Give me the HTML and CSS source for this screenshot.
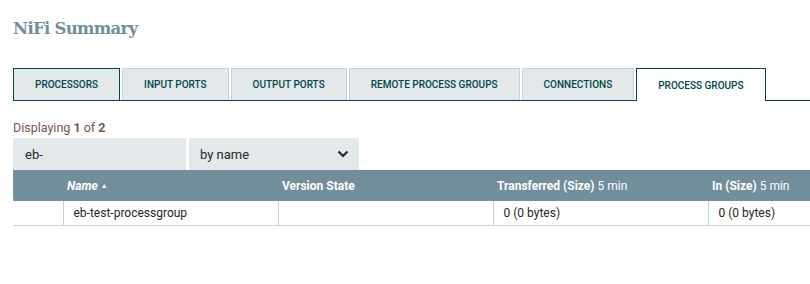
FILE: index.html
```html
<!DOCTYPE html>
<html lang="en">
<head>
  <meta charset="UTF-8" />
  <title>NiFi Summary</title>
  <link rel="stylesheet" href="styles.css">
</head>
<body>
  <div class="page">
    <h1 class="title">NiFi Summary</h1>

    <ul class="tabs">
      <li class="tab focused">Processors</li>
      <li class="tab">Input Ports</li>
      <li class="tab">Output Ports</li>
      <li class="tab">Remote Process Groups</li>
      <li class="tab">Connections</li>
      <li class="tab active">Process Groups</li>
    </ul>

    <div class="summary">Displaying <b>1</b> of <b>2</b></div>

    <div class="filter">
      <div class="filter-input">eb-</div>
      <div class="filter-select">
        <span>by name</span>
        <svg width="12" height="8" viewBox="0 0 12 8">
          <polyline points="1.5,1.5 6,6 10.5,1.5" fill="none" stroke="#262626" stroke-width="2.2"/>
        </svg>
      </div>
    </div>

    <table class="grid">
      <colgroup>
        <col style="width: 50px">
        <col style="width: 215px">
        <col style="width: 215px">
        <col style="width: 215px">
        <col style="width: 215px">
      </colgroup>
      <thead>
        <tr>
          <th></th>
          <th class="sorted">Name <span class="arrow">&#9650;</span></th>
          <th>Version State</th>
          <th>Transferred (Size) <span class="unit">5 min</span></th>
          <th>In (Size) <span class="unit">5 min</span></th>
        </tr>
      </thead>
      <tbody>
        <tr>
          <td></td>
          <td>eb-test-processgroup</td>
          <td></td>
          <td>0 (0 bytes)</td>
          <td>0 (0 bytes)</td>
        </tr>
      </tbody>
    </table>
  </div>
</body>
</html>
```

FILE: styles.css
```css
body {
  margin: 0;
  background: #fff;
  font-family: Roboto, "Liberation Sans", sans-serif;
  overflow: hidden;
}
.page {
  padding: 0 0 0 13px;
}
.title {
  margin: 0;
  padding-top: 19px;
  height: 68px;
  box-sizing: border-box;
  font-family: "DejaVu Serif", serif;
  font-size: 16.5px;
  letter-spacing: -0.7px;
  font-weight: bold;
  color: #728e9b;
}
.tabs {
  display: flex;
  align-items: flex-end;
  gap: 2px;
  list-style: none;
  margin: 0;
  padding: 0;
  border-bottom: 1px solid #004849;
}
.tab {
  height: 32px;
  box-sizing: border-box;
  padding: 0 21px;
  display: flex;
  align-items: center;
  background: #e3e8eb;
  border: 1px solid #c7d2d7;
  border-bottom: none;
  color: #004849;
  font-size: 10px;
  font-weight: 500;
  text-transform: uppercase;
}
.tab.focused {
  border-color: #004849;
}
.tab.active {
  height: 33px;
  margin-bottom: -1px;
  background: #fff;
  border-color: #004849;
}
.summary {
  margin-top: 18px;
  font-size: 12.5px;
  color: #775351;
  line-height: 18px;
}
.filter {
  display: flex;
  gap: 3px;
  margin-top: 1px;
}
.filter-input, .filter-select {
  height: 32px;
  box-sizing: border-box;
  background: #e3e8eb;
  display: flex;
  align-items: center;
  font-size: 13px;
  color: #262626;
}
.filter-input {
  width: 173px;
  padding-left: 12px;
}
.filter-select {
  width: 170px;
  padding: 0 10px 0 11px;
  justify-content: space-between;
}
.grid {
  table-layout: fixed;
  border-collapse: collapse;
  width: 910px;
  font-size: 12px;
}
.grid th {
  background: #728e9b;
  color: #fff;
  font-weight: bold;
  text-align: left;
  height: 31px;
  padding: 0 4px;
  white-space: nowrap;
}
.grid th.sorted {
  font-style: italic;
}
.grid .arrow {
  font-size: 7px;
  font-style: normal;
  vertical-align: 2px;
}
.grid .unit {
  font-weight: normal;
}
.grid td {
  height: 24px;
  box-sizing: border-box;
  padding: 0 10px;
  color: #262626;
  border-left: 1px solid #c7d2d7;
  border-bottom: 1px solid #c7d2d7;
  white-space: nowrap;
}
.grid td:first-child {
  border-left: none;
}
```
